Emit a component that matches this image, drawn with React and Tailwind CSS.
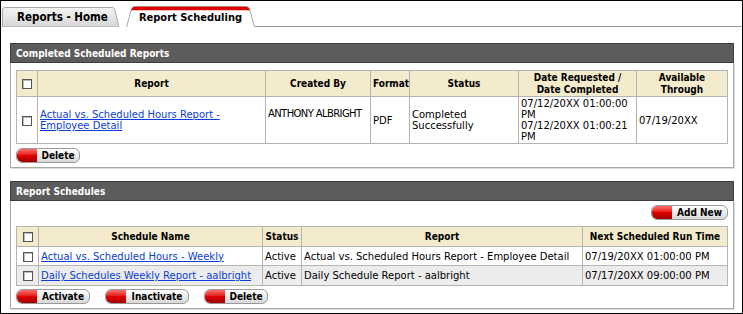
import React from "react";

const font = { fontFamily: "Verdana, 'DejaVu Sans', sans-serif" };
const boldFont = { fontFamily: "'DejaVu Sans Condensed', 'DejaVu Sans', sans-serif", fontStretch: "condensed" };

function RedButton({ label, width }) {
    return (
        <button
            className="flex h-[15px] items-stretch overflow-hidden rounded-[6px] border border-[#9a9a9a] bg-gradient-to-b from-white to-[#d8d8d8] p-0 text-[10px] font-bold text-black"
            style={{ width, ...boldFont }}
        >
            <span className="w-[20px] shrink-0 rounded-l-[5px] bg-gradient-to-b from-[#ff6a6a] via-[#e00000] to-[#a00000]" />
            <span className="flex flex-1 items-center justify-center leading-none">{label}</span>
        </button>
    );
}

function Box() {
    return <span className="inline-block h-[10px] w-[10px] border border-[#555] bg-white align-middle shadow-[inset_1px_1px_0_#bbb]" />;
}

function SectionHeader({ title }) {
    return (
        <div className="flex h-[20px] items-center border border-[#3c3c3c] bg-[#5c5c5c] pl-[5px] text-[10px] font-bold text-white" style={boldFont}>
            {title}
        </div>
    );
}

const th = "border border-[#b4b4b4] bg-[#f3ebcb] px-[2px] text-center font-bold leading-[12px] whitespace-nowrap";
const td = "border border-[#b4b4b4] px-[2px] leading-[11px] align-middle";

export default function App() {
    return (
        <div className="relative h-[314px] w-[743px] overflow-hidden border border-black bg-white text-[10px] text-black" style={font}>
            {/* tabs */}
            <div className="flex h-[26px] items-end">
                <div className="relative ml-[1px] flex h-[20px] w-[117px] items-center justify-center pl-[4px] pt-[1px] text-[11.5px] font-bold" style={boldFont}>
                    <svg className="absolute inset-0" width="117" height="20" viewBox="0 0 117 20">
                        <defs>
                            <linearGradient id="t1" x1="0" y1="0" x2="0" y2="1">
                                <stop offset="0" stopColor="#f4f4f4" />
                                <stop offset="1" stopColor="#d6d6d6" />
                            </linearGradient>
                        </defs>
                        <path d="M0.5 20 V3 Q0.5 0.5 3 0.5 H110 Q112 0.5 112.5 2 L117 20 Z" fill="url(#t1)" stroke="#a8a8a8" />
                    </svg>
                    <span className="relative">Reports - Home</span>
                </div>
                <div className="relative ml-[7px] flex h-[21px] w-[129px] items-center justify-center pt-[3px] text-[11px] font-bold" style={boldFont}>
                    <svg className="absolute inset-0" width="129" height="21" viewBox="0 0 129 21">
                        <path d="M0.5 21 L5.5 3 Q6.5 0.5 9 0.5 H120 Q122.5 0.5 123.5 3 L128.5 21" fill="#fff" stroke="#a8a8a8" />
                        <path d="M5.6 3.2 Q6.6 0.8 9 0.8 H120 Q122.4 0.8 123.4 3.2 L123.8 4.2 H5.3 Z" fill="#e00000" />
                    </svg>
                    <span className="relative">Report Scheduling</span>
                </div>
                <div className="h-[1px] flex-1 border-b border-[#9c9c9c]" />
            </div>

            {/* completed */}
            <div className="ml-[9px] mt-[16px] w-[724px]">
                <SectionHeader title="Completed Scheduled Reports" />
                <div className="border border-t-0 border-[#a8a8a8] px-[5px] pb-[4px] pt-[7px] shadow-[1px_1px_0_#ddd]">
                    <table className="w-[712px] table-fixed border-collapse">
                        <thead>
                            <tr className="h-[26px]" style={boldFont}>
                                <th className={th + " w-[21px]"}><Box /></th>
                                <th className={th + " w-[228px]"}>Report</th>
                                <th className={th + " w-[105px]"}>Created By</th>
                                <th className={th + " w-[39px] px-0"}>Format</th>
                                <th className={th + " w-[109px]"}>Status</th>
                                <th className={th + " w-[118px]"}>Date Requested /<br />Date Completed</th>
                                <th className={th}>Available<br />Through</th>
                            </tr>
                        </thead>
                        <tbody>
                            <tr className="h-[47px]">
                                <td className={td + " text-center"}><Box /></td>
                                <td className={td}>
                                    <a href="#" className="text-[#0b3ed6] underline">Actual vs. Scheduled Hours Report -<br />Employee Detail</a>
                                </td>
                                <td className={td + " whitespace-nowrap pt-[11px] align-top tracking-[-0.6px]"}>ANTHONY ALBRIGHT</td>
                                <td className={td}>PDF</td>
                                <td className={td}>Completed<br />Successfully</td>
                                <td className={td + " whitespace-nowrap"}>07/12/20XX 01:00:00<br />PM<br />07/12/20XX 01:00:21<br />PM</td>
                                <td className={td}>07/19/20XX</td>
                            </tr>
                        </tbody>
                    </table>
                    <div className="mt-[4px] flex">
                        <RedButton label="Delete" width={64} />
                    </div>
                </div>
            </div>

            {/* schedules */}
            <div className="ml-[9px] mt-[13px] w-[724px]">
                <SectionHeader title="Report Schedules" />
                <div className="border border-t-0 border-[#a8a8a8] px-[5px] pb-[4px] pt-[4px] shadow-[1px_1px_0_#ddd]">
                    <div className="flex justify-end">
                        <RedButton label="Add New" width={77} />
                    </div>
                    <table className="mt-[6px] w-[712px] table-fixed border-collapse">
                        <thead>
                            <tr className="h-[20px]" style={boldFont}>
                                <th className={th + " w-[22px]"}><Box /></th>
                                <th className={th + " w-[224px]"}>Schedule Name</th>
                                <th className={th + " w-[39px] px-0"}>Status</th>
                                <th className={th + " w-[281px]"}>Report</th>
                                <th className={th}>Next Scheduled Run Time</th>
                            </tr>
                        </thead>
                        <tbody>
                            <tr className="h-[19px]">
                                <td className={td + " text-center"}><Box /></td>
                                <td className={td + " whitespace-nowrap"}><a href="#" className="text-[#0b3ed6] underline">Actual vs. Scheduled Hours - Weekly</a></td>
                                <td className={td}>Active</td>
                                <td className={td + " whitespace-nowrap"}>Actual vs. Scheduled Hours Report - Employee Detail</td>
                                <td className={td + " whitespace-nowrap"}>07/19/20XX 01:00:00 PM</td>
                            </tr>
                            <tr className="h-[20px] bg-[#ececec]">
                                <td className={td + " text-center"}><Box /></td>
                                <td className={td + " whitespace-nowrap"}><a href="#" className="text-[#0b3ed6] underline">Daily Schedules Weekly Report - aalbright</a></td>
                                <td className={td}>Active</td>
                                <td className={td + " whitespace-nowrap"}>Daily Schedule Report - aalbright</td>
                                <td className={td + " whitespace-nowrap"}>07/17/20XX 09:00:00 PM</td>
                            </tr>
                        </tbody>
                    </table>
                    <div className="mt-[3px] flex gap-[15px]">
                        <RedButton label="Activate" width={74} />
                        <RedButton label="Inactivate" width={84} />
                        <RedButton label="Delete" width={64} />
                    </div>
                </div>
            </div>
        </div>
    );
}
